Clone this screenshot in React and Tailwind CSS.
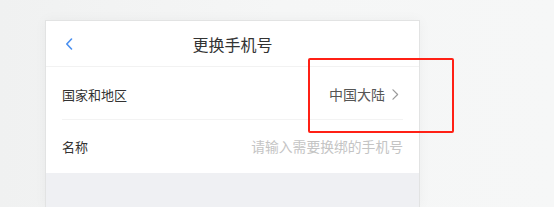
import React from 'react';

const ChevronLeft = () => (
  <svg width="8" height="12" viewBox="0 0 8 12" fill="none">
    <path d="M6.5 1L1.8 6l4.7 5" stroke="#4a90f0" strokeWidth="1.6" strokeLinecap="round" strokeLinejoin="round" />
  </svg>
);

const ChevronRight = () => (
  <svg width="7" height="11" viewBox="0 0 7 11" fill="none">
    <path d="M1 0.8l4.6 4.7L1 10.2" stroke="#9a9a9a" strokeWidth="1.2" strokeLinecap="round" strokeLinejoin="round" />
  </svg>
);

const App = () => {
  return (
    <div
      className="relative w-[554px] h-[207px] overflow-hidden bg-gradient-to-r from-[#f0f1f1] via-[#f5f6f6] to-[#f6f7f7] pt-[20px] pl-[45px]"
      style={{ fontFamily: '"Noto Sans CJK SC", "Noto Sans", sans-serif' }}
    >
      {/* Card */}
      <div className="w-[375px] h-[187px] bg-white border-l border-r border-t border-[#e2e3e3] shadow-[0_0_12px_rgba(0,0,0,0.04)] flex flex-col">
        {/* Header */}
        <div className="relative h-[46px] shrink-0 flex items-center justify-center border-b border-[#f2f2f2]">
          <div className="absolute left-[19px] top-[17px]">
            <ChevronLeft />
          </div>
          <span className="text-[16px] text-[#333] leading-none">更换手机号</span>
        </div>

        {/* Rows */}
        <div className="px-[16px]">
          <div className="h-[53px] pt-[3px] flex items-center justify-between border-b border-[#f3f3f3]">
            <span className="text-[13px] text-[#333]">国家和地区</span>
            <div className="flex items-center gap-[7px] pr-[4px]">
              <span className="text-[14px] text-[#555]">中国大陆</span>
              <ChevronRight />
            </div>
          </div>
          <div className="h-[53px] flex items-center justify-between">
            <span className="text-[13px] text-[#333]">名称</span>
            <span className="text-[13.8px] text-[#c4c4c4]">请输入需要换绑的手机号</span>
          </div>
        </div>

        <div className="flex-1 bg-[#eff0f3]"></div>
      </div>

      {/* Annotation box */}
      <div className="absolute left-[308px] top-[58px] w-[146px] h-[75px] border-2 border-[#ff2015] rounded-[2px]"></div>
    </div>
  );
};

export default App;
